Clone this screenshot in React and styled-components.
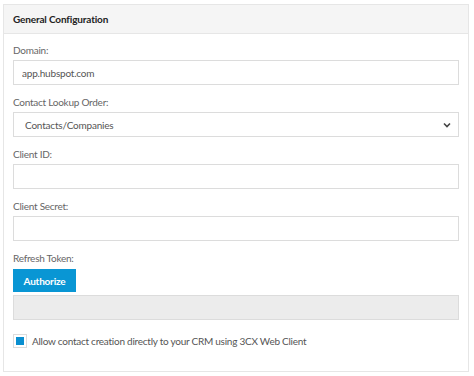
import styled, { createGlobalStyle } from "styled-components";

const GlobalStyle = createGlobalStyle`
  body {
    margin: 0;
    background: #ffffff;
    font-family: "Lato", "Open Sans", sans-serif;
  }
`;

const Page = styled.div`
  padding: 4px 5px 6px 3px;
`;

const Panel = styled.section`
  border: 1px solid #e6e6e6;
  background: #fff;
`;

const PanelHeader = styled.div`
  background: #f5f5f5;
  border-bottom: 1px solid #e6e6e6;
  height: 28px;
  display: flex;
  align-items: center;
  padding: 0 9px;
  font-size: 10px;
  letter-spacing: -0.15px;
  font-weight: bold;
  color: #222;
`;

const PanelBody = styled.div`
  padding: 8px 9px 22px 9px;
  display: flex;
  flex-direction: column;
  font-size: 10px;
  letter-spacing: -0.25px;
`;

const Label = styled.label`
  color: #666;
  line-height: 16px;
  margin-top: ${(p) => (p.$first ? "0" : "9px")};
  margin-bottom: 2px;
`;

const Input = styled.input`
  box-sizing: border-box;
  height: 25px;
  width: 100%;
  border: 1px solid #dcdcdc;
  background: ${(p) => (p.disabled ? "#ececec" : "#fff")};
  padding: 0 8px;
  font-family: inherit;
  font-size: 10px;
  letter-spacing: -0.2px;
  color: #555;
  outline: none;
`;

const Select = styled.select`
  box-sizing: border-box;
  appearance: none;
  height: 25px;
  width: 100%;
  border: 1px solid #dcdcdc;
  background: #fff
    url("data:image/svg+xml;utf8,<svg xmlns='http://www.w3.org/2000/svg' width='8' height='6' viewBox='0 0 8 6'><path d='M1 1.5 L4 4.5 L7 1.5' fill='none' stroke='%23444' stroke-width='1.6'/></svg>")
    no-repeat right 7px center;
  padding: 0 11px;
  font-family: inherit;
  font-size: 10px;
  letter-spacing: -0.2px;
  color: #555;
  outline: none;
`;

const Button = styled.button`
  align-self: flex-start;
  height: 23px;
  width: 63px;
  padding: 0;
  border: none;
  background: #0996d4;
  color: #fff;
  font-family: inherit;
  font-size: 10px;
  letter-spacing: -0.2px;
  font-weight: bold;
  margin-top: 1px;
  margin-bottom: 3px;
  cursor: pointer;
`;

const CheckRow = styled.div`
  display: flex;
  align-items: center;
  gap: 5px;
  margin-top: 13px;
  line-height: 16px;
  color: #555;
`;

const CheckBox = styled.span`
  box-sizing: border-box;
  width: 14px;
  height: 14px;
  border: 1px solid #dcdcdc;
  display: flex;
  align-items: center;
  justify-content: center;
  &::after {
    content: "";
    width: 8px;
    height: 8px;
    background: #0a8fd0;
  }
`;

export default function App() {
  return (
    <>
      <GlobalStyle />
      <Page>
        <Panel>
          <PanelHeader>General Configuration</PanelHeader>
          <PanelBody>
            <Label $first>Domain:</Label>
            <Input defaultValue="app.hubspot.com" />
            <Label>Contact Lookup Order:</Label>
            <Select defaultValue="cc">
              <option value="cc">Contacts/Companies</option>
              <option value="co">Companies/Contacts</option>
            </Select>
            <Label>Client ID:</Label>
            <Input />
            <Label>Client Secret:</Label>
            <Input />
            <Label>Refresh Token:</Label>
            <Button>Authorize</Button>
            <Input disabled />
            <CheckRow>
              <CheckBox />
              Allow contact creation directly to your CRM using 3CX Web Client
            </CheckRow>
          </PanelBody>
        </Panel>
      </Page>
    </>
  );
}
